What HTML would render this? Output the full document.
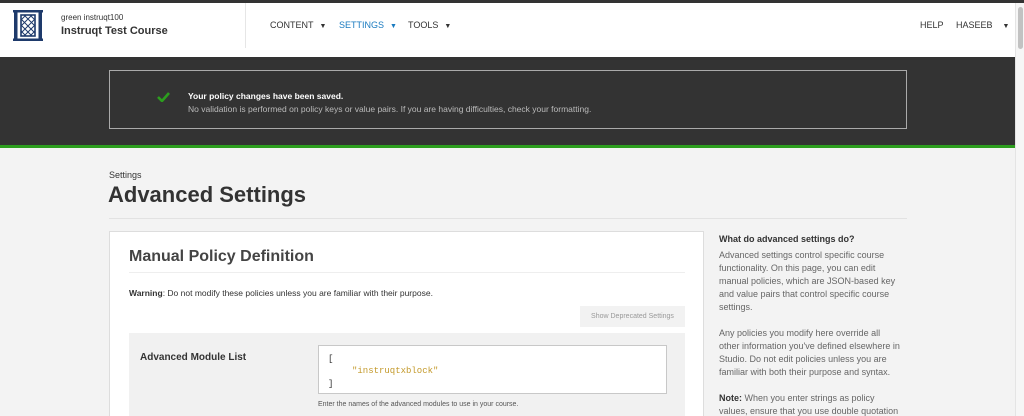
<!DOCTYPE html>
<html style="width:1024px;height:416px;overflow:hidden"><head><meta charset="utf-8"><style>
*{box-sizing:border-box;margin:0;padding:0}
body{width:1024px;height:416px;overflow:hidden;background:#f3f3f3;font-family:"Liberation Sans","DejaVu Sans",sans-serif;position:relative}
.top{position:absolute;left:0;top:0;width:1024px;height:3px;background:#333}
.hdr{position:absolute;left:0;top:3px;width:1015px;height:54px;background:#fff}
.sb{position:absolute;right:0;top:3px;width:9px;height:413px;background:#f6f6f6;border-left:1px solid #e4e4e4}
.sb div{position:absolute;left:2px;top:4px;width:5px;height:42px;background:#c2c2c2;border-radius:3px}
.small{position:absolute;left:61px;top:10px;font-size:8px;color:#333}
.course{position:absolute;left:61px;top:22px;font-size:11px;font-weight:bold;color:#333}
.vsep{position:absolute;left:245px;top:3px;width:1px;height:45px;background:#e6e6e6}
.nav{position:absolute;top:17px;font-size:9px;color:#333}
.nav .c{font-size:7px;margin-left:6px}
.ban{position:absolute;left:0;top:57px;width:1015px;height:88px;background:#333}
.green{position:absolute;left:0;top:145px;width:1015px;height:3px;background:#2c9e1e}
.msg{position:absolute;left:109px;top:70px;width:798px;height:59px;border:1px solid #aaa}
.msg b{position:absolute;left:78px;top:20px;font-size:8.5px;color:#fff}
.msg span{position:absolute;left:78px;top:33px;font-size:8.5px;color:#bbb;white-space:nowrap}
.chk{position:absolute;left:47px;top:21px}
.crumb{position:absolute;left:109px;top:170px;font-size:9px;color:#333}
h1{position:absolute;left:108px;top:182px;font-size:22px;font-weight:bold;color:#333}
.hl{position:absolute;left:109px;top:218px;width:798px;height:1px;background:#e2e2e2}
.card{position:absolute;left:109px;top:231px;width:595px;height:200px;background:#fff;border:1px solid #ddd}
.card h2{position:absolute;left:19px;top:16px;font-size:16px;font-weight:bold;color:#444}
.cl{position:absolute;left:19px;top:40px;width:556px;height:1px;background:#eee}
.warn{position:absolute;left:19px;top:56px;font-size:8.5px;color:#333}
.btn{position:absolute;left:470px;top:74px;width:105px;height:21px;background:#f2f2f2;font-size:7px;color:#999;text-align:center;line-height:21px}
.row{position:absolute;left:19px;top:101px;width:556px;height:100px;background:#f1f1f1}
.row .lab{position:absolute;left:11px;top:19px;font-size:10px;color:#333;font-weight:bold}
.ta{position:absolute;left:189px;top:12px;width:349px;height:49px;background:#fff;border:1px solid #c8c8c8;font-family:"Liberation Mono",monospace;font-size:9px;color:#333}
.ta .s{color:#c49a2c}
.hint{position:absolute;left:189px;top:68px;font-size:7px;color:#555}
.side{position:absolute;left:719px;top:233px;width:182px;font-size:9px;color:#666;line-height:13px}
.side h3{font-size:9px;color:#333;margin-bottom:3px}
.side p{margin-bottom:13px}
</style></head><body>
<div class="top"></div>
<div class="hdr">
<svg style="position:absolute;left:12px;top:6px" width="32" height="33" viewBox="0 0 32 33">
<rect x="1" y="1" width="30" height="2.5" fill="#1e3a6b"/><rect x="1" y="29.5" width="30" height="2.5" fill="#1e3a6b"/>
<rect x="2" y="1" width="3.5" height="31" fill="#1e3a6b"/><rect x="26.5" y="1" width="3.5" height="31" fill="#1e3a6b"/>
<rect x="9" y="6" width="14" height="21" fill="none" stroke="#1e3a6b" stroke-width="1.6"/>
<path d="M9 10L23 24M9 16L20 27M9 22L14 27M12 6L23 17M18 6L23 11M23 10L9 24M23 16L12 27M23 22L18 27M20 6L9 17M14 6L9 11" stroke="#1e3a6b" stroke-width="1"/>
</svg>
<div class="small">green instruqt100</div>
<div class="course">Instruqt Test Course</div>
<div class="nav" style="left:270px">CONTENT<span class="c">▼</span></div>
<div class="nav" style="left:339px;color:#1a7bc0">SETTINGS<span class="c">▼</span></div>
<div class="nav" style="left:408px">TOOLS<span class="c">▼</span></div>
<div class="nav" style="left:920px">HELP</div>
<div class="nav" style="left:956px">HASEEB<span class="c" style="margin-left:10px">▼</span></div>
</div>
<div class="vsep"></div>
<div class="sb"><div></div></div>
<div class="ban"></div>
<div class="green"></div>
<div class="msg">
<svg class="chk" width="13" height="10" viewBox="0 0 13 10"><path d="M1 5l4 4L12 1" stroke="#2c9e1e" stroke-width="2.6" fill="none"/></svg>
<b>Your policy changes have been saved.</b>
<span>No validation is performed on policy keys or value pairs. If you are having difficulties, check your formatting.</span>
</div>
<div class="crumb">Settings</div>
<h1>Advanced Settings</h1>
<div class="hl"></div>
<div class="card">
<h2>Manual Policy Definition</h2>
<div class="cl"></div>
<div class="warn"><b>Warning</b>: Do not modify these policies unless you are familiar with their purpose.</div>
<div class="btn">Show Deprecated Settings</div>
<div class="row">
<div class="lab">Advanced Module List</div>
<div class="ta">
<div style="position:absolute;left:9px;top:8px">[</div>
<div style="position:absolute;left:33px;top:20px" class="s">"instruqtxblock"</div>
<div style="position:absolute;left:9px;top:33px">]</div>
</div>
<div class="hint">Enter the names of the advanced modules to use in your course.</div>
</div>
</div>
<div class="side">
<h3>What do advanced settings do?</h3>
<p>Advanced settings control specific course functionality. On this page, you can edit manual policies, which are JSON-based key and value pairs that control specific course settings.</p>
<p>Any policies you modify here override all other information you've defined elsewhere in Studio. Do not edit policies unless you are familiar with both their purpose and syntax.</p>
<p><b style="color:#333">Note:</b> When you enter strings as policy values, ensure that you use double quotation</p>
</div>
</body></html>
